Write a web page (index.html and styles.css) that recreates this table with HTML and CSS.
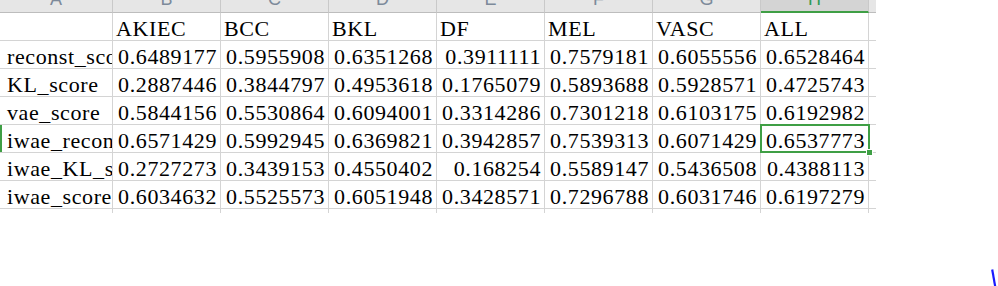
FILE: index.html
```html
<!DOCTYPE html>
<html lang="en">
<head>
<meta charset="utf-8">
<title>Sheet</title>
<link rel="stylesheet" href="styles.css">
</head>
<body>
<div class="page">
  <div class="sheet">
    <div class="hd"><span>A</span></div>
    <div class="hd"><span>B</span></div>
    <div class="hd"><span>C</span></div>
    <div class="hd"><span>D</span></div>
    <div class="hd"><span>E</span></div>
    <div class="hd"><span>F</span></div>
    <div class="hd"><span>G</span></div>
    <div class="hd sel"><span>H</span></div>
    <div class="hd edge"></div>

    <div class="c lbl"></div>
    <div class="c hl">AKIEC</div>
    <div class="c hl">BCC</div>
    <div class="c hl">BKL</div>
    <div class="c hl">DF</div>
    <div class="c hl">MEL</div>
    <div class="c hl">VASC</div>
    <div class="c hl">ALL</div>
    <div class="c edge"></div>

    <div class="c lbl">reconst_score</div>
    <div class="c num">0.6489177</div>
    <div class="c num">0.5955908</div>
    <div class="c num">0.6351268</div>
    <div class="c num">0.3911111</div>
    <div class="c num">0.7579181</div>
    <div class="c num">0.6055556</div>
    <div class="c num">0.6528464</div>
    <div class="c edge"></div>

    <div class="c lbl">KL_score</div>
    <div class="c num">0.2887446</div>
    <div class="c num">0.3844797</div>
    <div class="c num">0.4953618</div>
    <div class="c num">0.1765079</div>
    <div class="c num">0.5893688</div>
    <div class="c num">0.5928571</div>
    <div class="c num">0.4725743</div>
    <div class="c edge"></div>

    <div class="c lbl">vae_score</div>
    <div class="c num">0.5844156</div>
    <div class="c num">0.5530864</div>
    <div class="c num">0.6094001</div>
    <div class="c num">0.3314286</div>
    <div class="c num">0.7301218</div>
    <div class="c num">0.6103175</div>
    <div class="c num">0.6192982</div>
    <div class="c edge"></div>

    <div class="c lbl row-sel">iwae_reconst_score</div>
    <div class="c num">0.6571429</div>
    <div class="c num">0.5992945</div>
    <div class="c num">0.6369821</div>
    <div class="c num">0.3942857</div>
    <div class="c num">0.7539313</div>
    <div class="c num">0.6071429</div>
    <div class="c num active">0.6537773</div>
    <div class="c edge"></div>

    <div class="c lbl">iwae_KL_score</div>
    <div class="c num">0.2727273</div>
    <div class="c num">0.3439153</div>
    <div class="c num">0.4550402</div>
    <div class="c num">0.168254</div>
    <div class="c num">0.5589147</div>
    <div class="c num">0.5436508</div>
    <div class="c num">0.4388113</div>
    <div class="c edge"></div>

    <div class="c lbl">iwae_score</div>
    <div class="c num">0.6034632</div>
    <div class="c num">0.5525573</div>
    <div class="c num">0.6051948</div>
    <div class="c num">0.3428571</div>
    <div class="c num">0.7296788</div>
    <div class="c num">0.6031746</div>
    <div class="c num">0.6197279</div>
    <div class="c edge"></div>

    <div class="c tail"></div>
    <div class="c tail"></div>
    <div class="c tail"></div>
    <div class="c tail"></div>
    <div class="c tail"></div>
    <div class="c tail"></div>
    <div class="c tail"></div>
    <div class="c tail"></div>
    <div class="c tail edge"></div>
  </div>
  <svg class="stray" width="6" height="18" viewBox="0 0 6 18"><path d="M1.2 0.5 L4.2 17.5" stroke="#1a1aff" stroke-width="2.2" fill="none"/></svg>
</div>
</body>
</html>
```

FILE: styles.css
```css
html, body {
  margin: 0;
  padding: 0;
  background: #ffffff;
}

.page {
  position: relative;
  width: 998px;
  height: 286px;
  overflow: hidden;
}

.sheet {
  display: grid;
  grid-template-columns: 113px repeat(7, 108px) 7px;
  grid-template-rows: 13px repeat(7, 28px) 4px;
  width: 876px;
  font-family: "Liberation Serif", "Times New Roman", serif;
  font-size: 22px;
  color: #000;
}

.hd {
  box-sizing: border-box;
  background: #e6e6e6;
  border-right: 1px solid #c9c9c9;
  border-bottom: 1px solid #bdbdbd;
  display: flex;
  align-items: flex-end;
  justify-content: center;
  overflow: hidden;
  font-family: "Liberation Sans", Arial, sans-serif;
  font-size: 18px;
  color: #7d8a9a;
}

.hd span {
  line-height: 18px;
  margin-bottom: 4px;
}

.hd.sel {
  background: #d4d4d4;
  border-bottom: 2px solid #3f9f45;
  color: #2f9a55;
}

.hd.sel span {
  margin-bottom: 3px;
}

.hd.edge {
  border-right: none;
}

.c {
  box-sizing: border-box;
  border-right: 1px solid #d4d4d4;
  border-bottom: 1px solid #d4d4d4;
  display: flex;
  align-items: flex-end;
  overflow: hidden;
  white-space: nowrap;
  line-height: 22px;
  letter-spacing: 0.6px;
}

.c.lbl {
  padding-left: 7px;
}

.c.row-sel {
  box-shadow: inset 2px 0 0 #3f9f45;
}

.c.hl {
  padding-left: 3px;
}

.c.num {
  justify-content: flex-end;
  padding-right: 3px;
}

.c.edge {
  border-right: none;
}

.c.tail {
  border-bottom: none;
}

.c.active {
  position: relative;
  overflow: visible;
}

.c.active::before {
  content: "";
  position: absolute;
  left: -1px;
  top: -1px;
  right: -2px;
  bottom: -1px;
  border: 2px solid #3f9f45;
  pointer-events: none;
}

.c.active::after {
  content: "";
  position: absolute;
  right: -5px;
  bottom: -4px;
  width: 5px;
  height: 5px;
  background: #3f9f45;
  border: 1px solid #ffffff;
  box-sizing: content-box;
}

.stray {
  position: absolute;
  left: 991px;
  top: 269px;
}
```
